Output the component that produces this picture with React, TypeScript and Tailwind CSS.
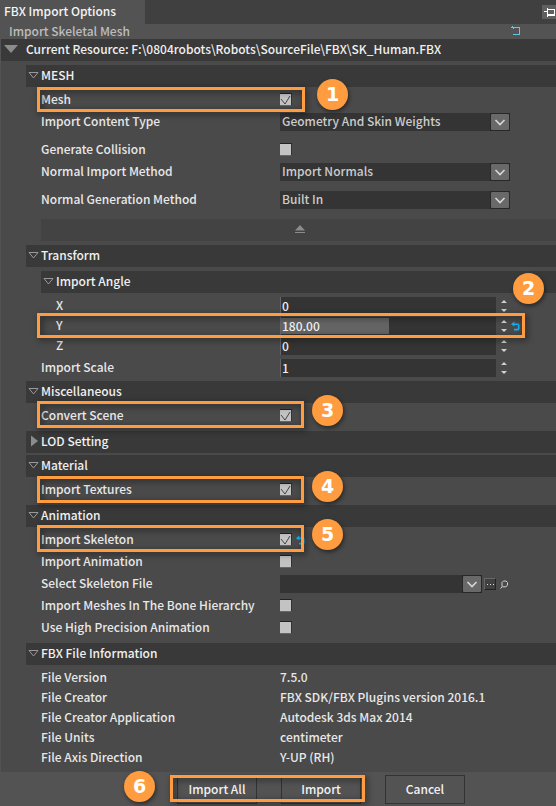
import type { ReactNode } from "react";

function ResetIcon({ className }: { className: string }) {
  return (
    <svg viewBox="0 0 10 10" className={`h-[10px] w-[10px] shrink-0 ${className}`} shapeRendering="crispEdges" aria-hidden="true">
      <path d="M1 1h8v8H2V8h6V2H3v1H2V2H0V1h1V0h1v1z" fill="currentColor" />
    </svg>
  );
}

function BoldResetIcon() {
  return (
    <svg viewBox="0 0 10 10" className="h-[10px] w-[10px] shrink-0 text-[#14aef0]" aria-hidden="true">
      <path d="M0 3.2L3.4 0.6V2.4H7.2L8.6 3.8V8L7.4 9.4H3V7.8H6.8V4H3.4V5.6z" fill="currentColor" />
    </svg>
  );
}

function Badge({ n, className }: { n: number; className: string }) {
  return (
    <span
      className={`absolute z-20 flex h-[31px] w-[31px] items-center justify-center rounded-full bg-[#ff9c40] font-['DejaVu_Sans'] text-[19px] leading-none font-bold text-white shadow-[1px_2px_4px_rgba(0,0,0,0.5)] ${className}`}
    >
      {n}
    </span>
  );
}

function Highlight({ className }: { className: string }) {
  return (
    <span
      className={`pointer-events-none absolute z-10 border-[3px] border-[#ff9c40] drop-shadow-[2px_2px_3px_rgba(0,0,0,0.6)] ${className}`}
    />
  );
}

function Header({ title, open = true }: { title: string; open?: boolean }) {
  return (
    <button type="button" className="flex h-[22px] w-full items-center bg-[#393939] pb-0.5 text-left text-[#f0f0f0]">
      <svg viewBox="0 0 15 12" className="h-[12px] w-[15px] shrink-0" aria-hidden="true">
        {open ? (
          <path d="M3 3.5H12L7.5 9z" fill="none" stroke="#999" />
        ) : (
          <path d="M5 0.5V11.5L12 6z" fill="#8c8c8c" />
        )}
      </svg>
      {title}
    </button>
  );
}

function Row({
  label,
  id,
  small = false,
  indent = false,
  children,
}: {
  label: string;
  id?: string;
  small?: boolean;
  indent?: boolean;
  children: ReactNode;
}) {
  return (
    <div className={`relative flex items-center ${small ? "h-[20px]" : "h-[22px]"}`}>
      <label htmlFor={id} className={`w-[239px] shrink-0 pb-0.5 ${indent ? "pl-[15px]" : ""}`}>
        {label}
      </label>
      {children}
    </div>
  );
}

function Check({ id, checked = false }: { id: string; checked?: boolean }) {
  return (
    <span className="relative mb-px block h-[13px] w-[12px] shrink-0">
      <input
        id={id}
        type="checkbox"
        defaultChecked={checked}
        className="peer block h-[13px] w-[12px] appearance-none border-t border-r border-b border-t-[#222] border-r-[#333] border-b-[#666] bg-[#c3c3c3]"
      />
      <svg viewBox="0 0 12 13" className="pointer-events-none absolute inset-0 hidden h-[13px] w-[12px] peer-checked:block" aria-hidden="true">
        <path d="M1 6L5 11L10 3" fill="none" stroke="#444" />
      </svg>
    </span>
  );
}

function Combo({ id, value, narrow = false }: { id: string; value: string; narrow?: boolean }) {
  return (
    <span className={`relative block h-[18px] shrink-0 bg-[#343434] ${narrow ? "w-[202px]" : "w-[230px]"}`}>
      <select id={id} className="block h-[18px] w-full appearance-none bg-transparent pb-0.5 pl-0.5 leading-[16px] text-[#cccccc]">
        <option>{value}</option>
      </select>
      <svg viewBox="0 0 20 18" className="pointer-events-none absolute top-0 right-0 h-[18px] w-[20px]" aria-hidden="true">
        <rect width="20" height="18" fill="#282828" />
        <rect x="1" y="1" width="18" height="16" rx="1" fill="#696969" />
        <path d="M5.5 7L10 11.5L14.5 7" fill="none" stroke="#d8d8d8" strokeWidth="1.6" />
      </svg>
    </span>
  );
}

function NumberField({ id, value, filled = false }: { id: string; value: string; filled?: boolean }) {
  return (
    <>
      <span className="relative block h-[18px] w-[216px] shrink-0 border-l border-[#666] bg-[#343434]">
        {filled && <span className="absolute inset-y-px left-0 w-1/2 bg-[#646464]" />}
        <input
          id={id}
          type="text"
          defaultValue={value}
          className="relative block h-[18px] w-full bg-transparent pb-0.5 pl-px leading-[16px] text-[#f0f0f0]"
        />
      </span>
      <button type="button" aria-label={`Step ${id}`} className="ml-[5px] h-[12px] w-[6px] shrink-0">
        <svg viewBox="0 0 6 12" className="h-[12px] w-[6px]" aria-hidden="true">
          <path d="M0 3L3 0L6 3zM0 9L3 12L6 9z" fill="#d0d0d0" />
        </svg>
      </button>
    </>
  );
}

const fileInfo = [
  ["File Version", "7.5.0"],
  ["File Creator", "FBX SDK/FBX Plugins version 2016.1"],
  ["File Creator Application", "Autodesk 3ds Max 2014"],
  ["File Units", "centimeter"],
  ["File Axis Direction", "Y-UP (RH)"],
];

const footerButton = "flex h-[29px] w-[80px] items-center justify-center border border-[#333] bg-[#535353] pb-px text-[#f2f2f2]";

export default function App() {
  return (
    <div className="min-h-screen overflow-hidden bg-[#535353] font-['Noto_Sans_CJK_SC','Noto_Sans',sans-serif] text-[12px] leading-[20px] font-medium text-[#e8e8e8]">
      <div className="flex h-[24px] justify-between bg-[#404040]">
        <div role="tab" className="w-[145px] bg-[#535353] pl-1 leading-[22px] text-[#f4f4f4]">
          FBX Import Options
        </div>
        <button type="button" aria-label="Pin" className="mt-[5px] h-[14px] w-[14px] bg-[#606060]">
          <svg viewBox="0 0 14 14" className="h-[14px] w-[14px]" shapeRendering="crispEdges" aria-hidden="true">
            <path d="M2 6h3V3h1v1h7v7H6v1H5V7H2zM6 5v4h6V5z" fill="#fff" fillRule="evenodd" />
          </svg>
        </button>
      </div>
      <div className="flex h-[15px] items-center justify-between pb-0.5 pr-[35px] pl-[9px] text-[#bdbdbd]">
        <span>Import Skeletal Mesh</span>
        <ResetIcon className="text-[#5bcbe0]" />
      </div>

      <main className="ml-px bg-[#4a4a4a] pb-1">
        <button type="button" className="flex h-[22px] w-full items-center bg-[#393939] pb-0.5 pl-[3px] text-left text-[#f0f0f0]">
          <svg viewBox="0 0 14 8" className="mr-2 h-[8px] w-[14px]" aria-hidden="true">
            <path d="M0 0H14L7 8z" fill="#8c8c8c" />
          </svg>
          Current Resource: F:\0804robots\Robots\SourceFile\FBX\SK_Human.FBX
        </button>

        <div className="pt-1 pl-[25px]">
          <section>
            <Header title="MESH" />
            <div className="pt-0.5 pb-1 pl-[15px]">
              <Row label="Mesh" id="mesh">
                <Check id="mesh" checked />
                <Highlight className="-top-0.5 -left-1 h-[25px] w-[268px]" />
                <Badge n={1} className="-top-[10px] left-[276px]" />
              </Row>
              <Row label="Import Content Type" id="content">
                <Combo id="content" value="Geometry And Skin Weights" />
              </Row>
              <div className="pt-1.5">
                <Row label="Generate Collision" id="collision">
                  <Check id="collision" />
                </Row>
                <Row label="Normal Import Method" id="normals">
                  <Combo id="normals" value="Import Normals" />
                </Row>
              </div>
              <div className="pt-1.5">
                <Row label="Normal Generation Method" id="generation">
                  <Combo id="generation" value="Built In" />
                </Row>
              </div>
              <button type="button" aria-label="Collapse" className="mt-2 flex h-[22px] w-full items-center justify-center bg-[#434343] pb-0.5 pl-0.5">
                <svg viewBox="0 0 10 8" className="h-[8px] w-[10px]" aria-hidden="true">
                  <path d="M0 5.5L5 0L10 5.5zM0 7h10v1H0z" fill="#8c8c8c" />
                </svg>
              </button>
            </div>
          </section>

          <section>
            <Header title="Transform" />
            <div className="pt-1 pb-0.5 pl-[15px]">
              <Header title="Import Angle" />
              <div className="pt-[3px] pb-px">
                <Row label="X" id="x" small indent>
                  <NumberField id="x" value="0" />
                </Row>
                <Row label="Y" id="y" small indent>
                  <NumberField id="y" value="180.00" filled />
                  <span className="ml-1">
                    <BoldResetIcon />
                  </span>
                  <Highlight className="-top-[3px] -left-1 h-[25px] w-[488px]" />
                  <Badge n={2} className="-top-[43px] left-[472px]" />
                </Row>
                <Row label="Z" id="z" small indent>
                  <NumberField id="z" value="0" />
                </Row>
              </div>
              <Row label="Import Scale" id="scale">
                <NumberField id="scale" value="1" />
              </Row>
            </div>
          </section>

          <section>
            <Header title="Miscellaneous" />
            <div className="pt-0.5 pb-1 pl-[15px]">
              <Row label="Convert Scene" id="convert">
                <Check id="convert" checked />
                <Highlight className="-top-1 -left-1 h-[27px] w-[267px]" />
                <Badge n={3} className="-top-[10px] left-[271px]" />
              </Row>
            </div>
          </section>

          <section className="pb-0.5">
            <Header title="LOD Setting" open={false} />
          </section>

          <section>
            <Header title="Material" />
            <div className="pt-0.5 pb-1 pl-[15px]">
              <Row label="Import Textures" id="textures">
                <Check id="textures" checked />
                <Highlight className="-top-[3px] -left-1 h-[27px] w-[267px]" />
                <Badge n={4} className="-top-2 left-[271px]" />
              </Row>
            </div>
          </section>

          <section>
            <Header title="Animation" />
            <div className="pt-0.5 pb-1 pl-[15px]">
              <Row label="Import Skeleton" id="skeleton">
                <Check id="skeleton" checked />
                <span className="ml-1">
                  <BoldResetIcon />
                </span>
                <Highlight className="-top-1 -left-1 h-[27px] w-[267px]" />
                <Badge n={5} className="-top-[10px] left-[271px]" />
              </Row>
              <Row label="Import Animation" id="animation">
                <Check id="animation" />
              </Row>
              <Row label="Select Skeleton File" id="file">
                <Combo id="file" value="" narrow />
                <button type="button" aria-label="Browse" className="ml-0.5 h-[12px] w-[12px] border border-t-[#666] border-r-[#222] border-b-[#222] border-l-[#666] bg-[#404040]">
                  <svg viewBox="0 0 10 10" className="h-[10px] w-[10px]" shapeRendering="crispEdges" aria-hidden="true">
                    <path d="M2 5h1v1H2zM5 5h1v1H5zM8 5h1v1H8z" fill="#ddd" />
                  </svg>
                </button>
                <button type="button" aria-label="Find" className="ml-1 h-[9px] w-[9px]">
                  <svg viewBox="0 0 9 9" className="h-[9px] w-[9px]" aria-hidden="true">
                    <path d="M2 6.5V2.5L3.5 1H6L7.5 2.5V5L6 6.8H2.2L0.5 8.5" fill="none" stroke="#d0d0d0" />
                  </svg>
                </button>
              </Row>
              <Row label="Import Meshes In The Bone Hierarchy" id="bones">
                <Check id="bones" />
              </Row>
              <Row label="Use High Precision Animation" id="precision">
                <Check id="precision" />
              </Row>
            </div>
          </section>

          <section>
            <Header title="FBX File Information" />
            <dl className="pt-[3px] pl-[15px]">
              {fileInfo.map(([name, value]) => (
                <div key={name} className="flex h-[20px] items-center pb-0.5">
                  <dt className="w-[239px] shrink-0">{name}</dt>
                  <dd>{value}</dd>
                </div>
              ))}
            </dl>
          </section>
        </div>
      </main>

      <footer className="flex gap-6 pt-[3px] pb-0.5 pl-[177px]">
        <div className="relative flex gap-6">
          <button type="button" className={footerButton}>Import All</button>
          <button type="button" className={footerButton}>Import</button>
          <Highlight className="top-0 -left-[7px] h-[27px] w-[195px]" />
          <Badge n={6} className="-top-1 -left-[53px]" />
        </div>
        <button type="button" className={footerButton}>Cancel</button>
      </footer>
    </div>
  );
}
